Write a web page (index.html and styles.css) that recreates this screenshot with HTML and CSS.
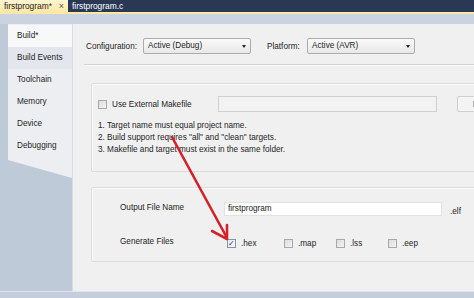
FILE: index.html
```html
<!DOCTYPE html>
<html lang="en">
<head>
    <meta charset="UTF-8">
    <title>firstprogram - Build</title>
    <link rel="stylesheet" href="styles.css">
</head>
<body>
    <div class="window">
        <div class="doc-tabs">
            <div class="doc-tab active"><span>firstprogram*</span><span class="close">&#215;</span></div>
            <div class="doc-tab">firstprogram.c</div>
        </div>
        <div class="doc-line"></div>
        <div class="strip"></div>

        <div class="main">
            <ul class="side-tabs">
                <li class="selected">Build*</li>
                <li class="hover">Build Events</li>
                <li>Toolchain</li>
                <li>Memory</li>
                <li>Device</li>
                <li>Debugging</li>
            </ul>

            <div class="content">
                <div class="config-row">
                    <span class="config-label">Configuration:</span>
                    <div class="select">Active (Debug)<span class="caret"></span></div>
                    <span class="config-label platform">Platform:</span>
                    <div class="select">Active (AVR)<span class="caret"></span></div>
                </div>
                <div class="separator"></div>

                <div class="group makefile">
                    <div class="makefile-row">
                        <div class="check-item wide">
                            <span class="check"></span>
                            <span>Use External Makefile</span>
                        </div>
                        <div class="textbox disabled"></div>
                        <div class="browse"><span></span></div>
                    </div>
                    <ol class="notes">
                        <li>1. Target name must equal project name.</li>
                        <li>2. Build support requires "all" and "clean" targets.</li>
                        <li>3. Makefile and target must exist in the same folder.</li>
                    </ol>
                </div>

                <div class="group output">
                    <div class="field-label">Output File Name</div>
                    <div class="name-row">
                        <div class="textbox">firstprogram</div>
                        <span class="ext">.elf</span>
                    </div>
                    <div class="field-label">Generate Files</div>
                    <div class="files-row">
                        <div class="check-item first"><span class="check checked">&#10003;</span><span>.hex</span></div>
                        <div class="check-item"><span class="check"></span><span>.map</span></div>
                        <div class="check-item"><span class="check"></span><span>.lss</span></div>
                        <div class="check-item"><span class="check"></span><span>.eep</span></div>
                    </div>
                </div>
            </div>
        </div>
        <div class="bottom"></div>

        <!-- annotation arrow drawn over the dialog -->
        <svg class="arrow" width="474" height="298" viewBox="0 0 474 298">
            <line x1="172" y1="137" x2="226" y2="236" />
            <polyline points="212,231 227,239 227,225" />
        </svg>
    </div>
</body>
</html>
```

FILE: styles.css
```css
* {
    margin: 0;
    padding: 0;
    box-sizing: border-box;
    font-family: 'Liberation Sans', Arial, sans-serif;
}

body {
    width: 474px;
    height: 298px;
    overflow: hidden;
    background-color: #bfcad9;
    font-size: 8.2px;
    color: #1e1e1e;
}

.window {
    position: relative;
    height: 298px;
    display: flex;
    flex-direction: column;
}

/* document tabs */
.doc-tabs {
    height: 12px;
    background-color: #293955;
    display: flex;
}

.doc-tab {
    color: white;
    font-size: 8.4px;
    line-height: 12px;
    padding: 0 4px;
}

.doc-tab.active {
    width: 68px;
    display: flex;
    justify-content: space-between;
    padding: 0 4px 0 4px;
    background: linear-gradient(#fff6d2, #ffe8a6);
    color: #1e1e1e;
}

.close {
    font-size: 9px;
    color: #555;
}

.doc-line {
    height: 2px;
    background-color: #ffe8a6;
}

.strip {
    height: 10px;
    background-color: #cbd3e0;
}

/* property page */
.main {
    flex: 1;
    display: flex;
    padding-left: 8px;
}

.side-tabs {
    width: 64px;
    list-style: none;
    padding-top: 1px;
    background-color: #eceef2;
    clip-path: polygon(0 0, 100% 0, 100% 154px, 0 136px);
}

.side-tabs li {
    height: 22px;
    line-height: 22px;
    padding-left: 9px;
}

.side-tabs .selected {
    background-color: #f8f8f9;
}

.side-tabs .hover {
    background-color: #e3e7ed;
}

.content {
    flex: 1;
    overflow: hidden;
    padding: 14px 0 0 13px;
    background-color: #f0f0f0;
    border-left: 1px solid #d8dce2;
}

.config-row {
    display: flex;
    align-items: center;
    height: 16px;
}

.config-label {
    width: 57px;
}

.config-label.platform {
    width: 40px;
    margin-left: 16px;
}

.select {
    position: relative;
    width: 108px;
    height: 16px;
    line-height: 14px;
    padding-left: 4px;
    border: 1px solid #acacac;
    border-radius: 2px;
    background: linear-gradient(#fafafa, #e8e8e8);
}

.caret {
    position: absolute;
    right: 4px;
    top: 6px;
    border-left: 2px solid transparent;
    border-right: 2px solid transparent;
    border-top: 3px solid #222;
}

.separator {
    height: 2px;
    margin: 10px 0 0 -2px;
    border-top: 1px solid #d2d2d2;
    border-bottom: 1px solid #fbfbfb;
}

.group {
    width: 420px;
    margin-left: 5px;
    border: 1px solid #dcdcdc;
    border-radius: 2px;
    box-shadow: inset 1px 1px 0 #fafafa;
}

.makefile {
    height: 89px;
    margin-top: 17px;
    padding: 12px 0 0 6px;
}

.makefile-row {
    display: flex;
    align-items: center;
    height: 16px;
}

.check-item {
    display: flex;
    align-items: center;
    gap: 5px;
}

.check-item.wide {
    width: 120px;
}

.check {
    width: 9px;
    height: 9px;
    border: 1px solid #a8a8a8;
    background: linear-gradient(135deg, #dcdcdc, #f4f4f4);
    font-size: 8px;
    line-height: 8px;
    text-align: center;
    color: #2a3a5a;
}

.check.checked {
    border-color: #8793a8;
    background: linear-gradient(135deg, #e4e8ef, #fafafa);
}

.textbox {
    height: 16px;
    width: 219px;
    border: 1px solid #c8c8c8;
    background-color: #fdfdfd;
    padding-left: 3px;
    line-height: 14px;
}

.textbox.disabled {
    background-color: #f2f2f2;
    border-color: #d0d0d0;
}

.browse {
    width: 40px;
    height: 16px;
    margin-left: 20px;
    border: 1px solid #cfcfcf;
    border-radius: 2px;
    background-color: #f4f4f4;
    padding: 4px 0 0 15px;
}

.browse span {
    display: block;
    width: 3px;
    height: 6px;
    background-color: #b0b0b0;
}

.notes {
    list-style: none;
    margin-top: 8px;
    line-height: 12px;
}

.output {
    height: 75px;
    margin-top: 15px;
    padding: 14px 0 0 28px;
    display: grid;
    grid-template-columns: 104px 1fr;
    grid-template-rows: 14px 14px;
    row-gap: 20px;
    align-items: center;
}

.field-label {
    margin-top: -3px;
}

.name-row {
    display: flex;
    align-items: center;
    gap: 8px;
}

.name-row .textbox {
    width: 218px;
    height: 14px;
    line-height: 12px;
    border-color: #e2e2e2;
    background-color: white;
}

.ext {
    margin-top: 5px;
}

.files-row {
    display: flex;
    padding-left: 3px;
}

.files-row .check-item {
    width: 52px;
}

.files-row .check-item.first {
    width: 57px;
}

.arrow {
    position: absolute;
    left: 0;
    top: 0;
    fill: none;
    stroke: #d52128;
    stroke-width: 2.6;
    stroke-linecap: round;
    stroke-linejoin: round;
}

.bottom {
    height: 7px;
    border-top: 1px solid #dfe4eb;
    background-color: #c3cddb;
}
```
